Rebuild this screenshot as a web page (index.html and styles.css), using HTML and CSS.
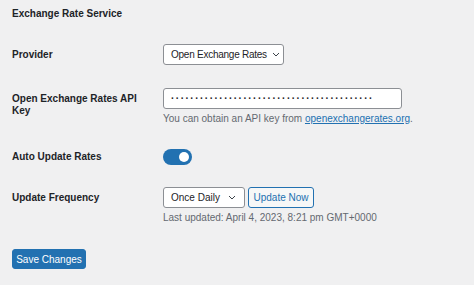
FILE: index.html
```html
<!DOCTYPE html>
<html lang="en">
<head>
    <meta charset="UTF-8">
    <title>Exchange Rate Service</title>
    <link rel="stylesheet" href="styles.css">
</head>
<body>
    <div class="wrap">
        <h2 class="title">Exchange Rate Service</h2>

        <div class="row row-provider">
            <div class="label">Provider</div>
            <div class="field">
                <div class="select select-provider">
                    <span>Open Exchange Rates</span>
                    <svg class="chev" width="8" height="5" viewBox="0 0 8 5"><path d="M1 1l3 3 3-3" fill="none" stroke="#3c434a" stroke-width="1"/></svg>
                </div>
            </div>
        </div>

        <div class="row row-key">
            <div class="label label-two">Open Exchange Rates API Key</div>
            <div class="field">
                <div class="input"><span class="dots">··········································</span></div>
                <p class="desc">You can obtain an API key from <a href="#">openexchangerates.org</a>.</p>
            </div>
        </div>

        <div class="row row-toggle">
            <div class="label">Auto Update Rates</div>
            <div class="field">
                <span class="toggle"><span class="knob"></span></span>
            </div>
        </div>

        <div class="row row-freq">
            <div class="label">Update Frequency</div>
            <div class="field">
                <div class="inline">
                    <div class="select select-freq">
                        <span>Once Daily</span>
                        <svg class="chev" width="8" height="5" viewBox="0 0 8 5"><path d="M1 1l3 3 3-3" fill="none" stroke="#3c434a" stroke-width="1"/></svg>
                    </div>
                    <button class="btn-secondary">Update Now</button>
                </div>
                <p class="desc">Last updated: April 4, 2023, 8:21 pm GMT+0000</p>
            </div>
        </div>

        <button class="btn-primary">Save Changes</button>
    </div>
</body>
</html>
```

FILE: styles.css
```css
body { margin: 0; background: #f0f0f1; color: #1d2327; font-family: "Liberation Sans", Arial, sans-serif; font-size: 10px; }
.wrap { padding: 7px 12px 0; }
.title { margin: 0; font-size: 10px; font-weight: bold; line-height: 14px; }
.row { display: grid; grid-template-columns: 151px 1fr; }
.row-provider { margin-top: 23px; }
.row-key { margin-top: 23px; }
.row-toggle { margin-top: 23px; }
.row-freq { margin-top: 22px; }
.label { font-weight: bold; line-height: 21px; }
.label-two { line-height: 12px; padding-top: 5px; width: 135px; }
.row-toggle .label { line-height: 16px; }
.select { box-sizing: border-box; height: 21px; border: 1px solid #8c8f94; border-radius: 3px; background: #fff; display: flex; align-items: center; justify-content: space-between; gap: 5px; padding: 0 6px 0 7px; white-space: nowrap; }
.select-provider { width: 121px; letter-spacing: -0.25px; }
.select-freq { width: 82px; padding-right: 8px; }
.chev { flex: none; }
.input { box-sizing: border-box; width: 239px; height: 21px; border: 1px solid #8c8f94; border-radius: 3px; background: #fff; padding: 0 7px; display: flex; align-items: center; overflow: hidden; }
.dots { letter-spacing: 1.5px; font-size: 10px; font-weight: bold; white-space: nowrap; }
.desc { margin: 3px 0 0; color: #646970; line-height: 14px; }
.desc a { color: #2271b1; }
.toggle { display: block; position: relative; width: 29px; height: 16px; border-radius: 8px; background: #2271b1; }
.knob { position: absolute; right: 3px; top: 3px; width: 10px; height: 10px; border-radius: 50%; background: #fff; }
.inline { display: flex; gap: 3px; }
.btn-secondary { box-sizing: border-box; height: 21px; width: 66px; padding: 0; border: 1px solid #2271b1; border-radius: 3px; background: #f6f7f7; color: #2271b1; font-family: inherit; font-size: 10px; }
.btn-primary { margin-top: 24px; box-sizing: border-box; height: 20px; width: 74px; padding: 0; border: 1px solid #2271b1; border-radius: 3px; background: #2271b1; color: #fff; font-family: inherit; font-size: 10px; }
```
